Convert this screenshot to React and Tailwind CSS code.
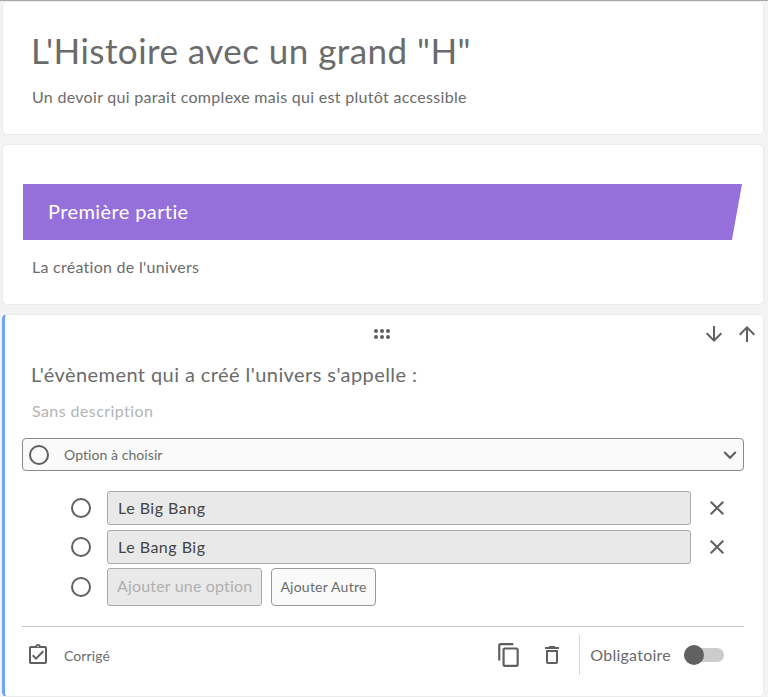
import React from "react";

// material style icons
const Icon = ({ d, className = "w-6 h-6" }) => (
  <svg viewBox="0 0 24 24" className={`${className} fill-[#5f5f5f] shrink-0`}>
    <path d={d} />
  </svg>
);

const paths = {
  down: "M20 12l-1.41-1.41L13 16.17V4h-2v12.17l-5.58-5.59L4 12l8 8 8-8z",
  up: "M4 12l1.41 1.41L11 7.83V20h2V7.83l5.58 5.59L20 12l-8-8-8 8z",
  close: "M19 6.41L17.59 5 12 10.59 6.41 5 5 6.41 10.59 12 5 17.59 6.41 19 12 13.41 17.59 19 19 17.59 13.41 12z",
  expand: "M16.59 8.59L12 13.17 7.41 8.59 6 10l6 6 6-6z",
  copy: "M16 1H4c-1.1 0-2 .9-2 2v14h2V3h12V1zm3 4H8c-1.1 0-2 .9-2 2v14c0 1.1.9 2 2 2h11c1.1 0 2-.9 2-2V7c0-1.1-.9-2-2-2zm0 16H8V7h11v14z",
  trash: "M16 9v10H8V9h8m-1.5-6h-5l-1 1H5v2h14V4h-3.5l-1-1zM18 7H6v12c0 1.1.9 2 2 2h8c1.1 0 2-.9 2-2V7z",
  check: "M18 9l-1.41-1.42L10 14.17l-2.59-2.58L6 13l4 4zm1-6h-4.18C14.4 1.84 13.3 1 12 1c-1.3 0-2.4.84-2.82 2H5c-.14 0-.27.01-.4.04-.39.08-.74.28-1.01.55-.18.18-.33.4-.43.64-.1.23-.16.49-.16.77v14c0 .27.06.54.16.78s.25.45.43.64c.27.27.62.47 1.01.55.13.02.26.03.4.03h14c1.1 0 2-.9 2-2V5c0-1.1-.9-2-2-2zm-7-.25c.41 0 .75.34.75.75s-.34.75-.75.75-.75-.34-.75-.75.34-.75.75-.75zM19 19H5V5h14v14z",
};

const Radio = () => (
  <span className="block w-5 h-5 rounded-full border-2 border-[#5f5f5f] shrink-0" />
);

const OptionRow = ({ label, rowClass }) => (
  <div className={`flex items-center h-[34px] ${rowClass}`}>
    <div className="w-[85px] flex justify-end pr-[16px]">
      <Radio />
    </div>
    <div className="w-[584px] h-full flex items-center pl-[10px] pb-px bg-[#e9e9e9] border border-[#aaaaaa] rounded-[3px] text-[16px] tracking-[0.5px] text-[#444444]">
      {label}
    </div>
    <button className="ml-[14px]">
      <Icon d={paths.close} className="w-6 h-6 block" />
    </button>
  </div>
);

const App = () => {
  return (
    <div className="w-[768px] h-[697px] overflow-hidden bg-[#f3f3f3] border-t border-[#a8a8a8] px-[2px] font-['Lato',sans-serif] text-[#6b6b6b]">
      {/* Title */}
      <section className="w-[762px] h-[134px] bg-white rounded-[5px] border border-[#ebebeb] pl-[29px] pt-[26px]">
        <h1 className="-ml-px text-[35px] leading-[44px] tracking-[0.45px]">L'Histoire avec un grand "H"</h1>
        <p className="mt-[15px] text-[16px] leading-[20px] tracking-[0.3px]">
          Un devoir qui parait complexe mais qui est plutôt accessible
        </p>
      </section>

      {/* Section */}
      <section className="mt-[9px] w-[762px] h-[161px] bg-white rounded-[5px] border border-[#ebebeb] pl-[20px] pt-[39px]">
        <div className="w-[719px] h-[56px] flex items-center pl-[25px] pb-[2px] bg-[#9570da] text-white text-[20px] tracking-[0.4px] [clip-path:polygon(0_0,100%_0,98.6%_100%,0_100%)]">
          Première partie
        </div>
        <p className="mt-[17px] ml-[9px] text-[16px] leading-[20px] tracking-[0.27px]">La création de l'univers</p>
      </section>

      {/* Question */}
      <section className="mt-[9px] w-[762px] h-[383px] bg-white rounded-[5px] border border-[#ebebeb] border-l-[3px] border-l-[#6ea4f5] flex flex-col">
        <div className="h-[38px] flex items-center">
          <div className="ml-[369px] grid grid-cols-3 gap-x-[2px] gap-y-[2px]">
            {[0, 1, 2, 3, 4, 5].map((i) => (
              <span key={i} className="block w-[4px] h-[4px] rounded-full bg-[#5f5f5f]" />
            ))}
          </div>
          <div className="ml-auto mr-[4px] flex items-center gap-[9px]">
            <Icon d={paths.down} />
            <Icon d={paths.up} />
          </div>
        </div>

        <p className="ml-[26px] mt-[9px] text-[20px] leading-[24px] tracking-[0.42px]">L'évènement qui a créé l'univers s'appelle :</p>
        <p className="ml-[27px] mt-[15px] text-[16px] leading-[20px] tracking-[0.42px] text-[#b4b4b4]">Sans description</p>

        <div className="ml-[17px] mt-[17px] w-[722px] h-[33px] shrink-0 flex items-center pl-[6px] bg-[#fafafa] border border-[#8a8a8a] rounded-[4px]">
          <Radio />
          <span className="ml-[15px] pb-px text-[14px] tracking-[0.07px]">Option à choisir</span>
          <Icon d={paths.expand} className="ml-auto w-[26px] h-[26px]" />
        </div>

        <div className="mt-[20px] ml-[17px] flex flex-col">
          <OptionRow label="Le Big Bang" />
          <OptionRow label="Le Bang Big" rowClass="mt-[5px]" />
          <div className="flex items-center h-[38px] mt-[4px]">
            <div className="w-[85px] flex justify-end pr-[16px]">
              <Radio />
            </div>
            <div className="w-[155px] h-full flex items-center pl-[9px] pb-[2px] bg-[#e9e9e9] border border-[#aaaaaa] rounded-[3px] text-[16px] tracking-[0.17px] text-[#b0b0b0]">
              Ajouter une option
            </div>
            <button className="ml-[9px] w-[105px] h-full pb-[2px] bg-[#fafafa] border border-[#999999] rounded-[4px] text-[14px] tracking-[0.23px]">
              Ajouter Autre
            </button>
          </div>
        </div>

        <div className="ml-[17px] mt-[20px] w-[722px] border-t border-[#c4c4c4]" />

        <div className="ml-[17px] w-[722px] flex items-center h-[59px] pb-[3px]">
          <Icon d={paths.check} className="ml-[4px] w-6 h-6" />
          <span className="ml-[14px] text-[14px] tracking-[0.1px]">Corrigé</span>
          <div className="ml-auto flex items-center h-[40px]">
            <Icon d={paths.copy} className="w-[26px] h-[26px]" />
            <Icon d={paths.trash} className="ml-[18px] w-6 h-6" />
            <span className="ml-[15px] h-full border-l border-[#d4d4d4]" />
            <span className="ml-[10px] text-[16px] tracking-[0.25px]">Obligatoire</span>
            <div className="ml-[13px] mr-[20px] relative w-[40px] h-[14px] rounded-full bg-[#cccccc]">
              <span className="absolute left-0 top-[-3px] w-[20px] h-[20px] rounded-full bg-[#616161]" />
            </div>
          </div>
        </div>
      </section>
    </div>
  );
};

export default App;
